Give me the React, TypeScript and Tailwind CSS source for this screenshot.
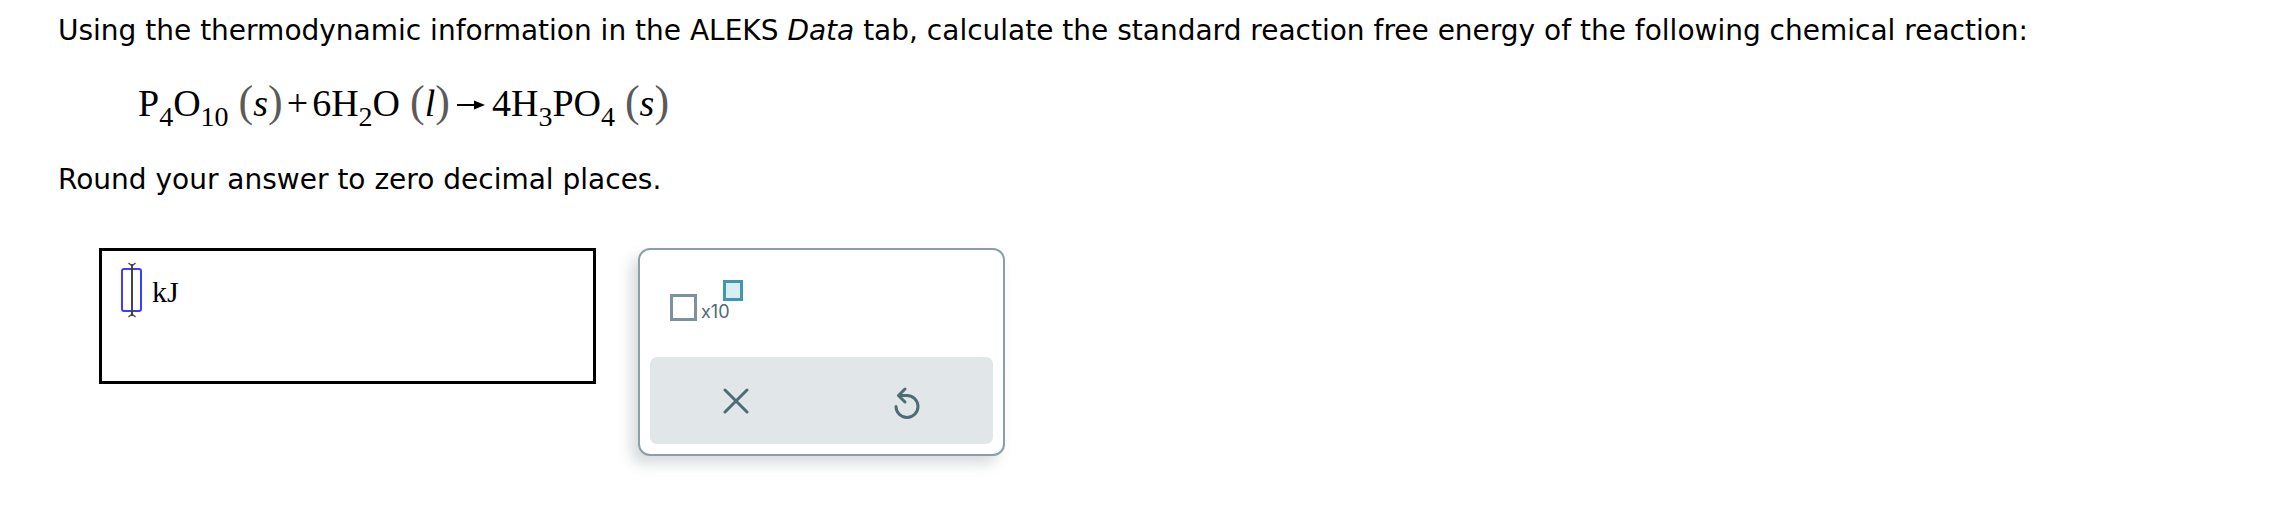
import React from 'react';

function Sub({ children }: { children: React.ReactNode }) {
  return <span className="relative top-[10px] text-[28px] leading-none">{children}</span>;
}

function Paren({ children }: { children: React.ReactNode }) {
  return <span className="text-[44px] text-[#5a5a5a]">{children}</span>;
}

function ReactionArrow() {
  return (
    <svg width="30" height="14" viewBox="0 0 30 14" className="inline-block align-middle mx-[6px] relative top-[-2px]">
      <line x1="1" y1="7" x2="20" y2="7" stroke="#000" strokeWidth="2" />
      <path d="M18 2.5 L29 7 L18 11.5 Z" fill="#000" />
    </svg>
  );
}

function CursorBox() {
  return (
    <div className="relative w-[21px] h-[44px] border-2 border-[#3d3dff] rounded-[3px]">
      <svg width="14" height="56" viewBox="0 0 14 56" className="absolute left-[1.5px] top-[-8px]">
        <line x1="7" y1="2" x2="7" y2="54" stroke="#444" strokeWidth="2" />
        <path d="M3.5 1 L7 4 L10.5 1" stroke="#444" strokeWidth="1.3" fill="none" />
        <path d="M3.5 55 L7 52 L10.5 55" stroke="#444" strokeWidth="1.3" fill="none" />
      </svg>
    </div>
  );
}

function ClearIcon() {
  return (
    <svg width="26" height="26" viewBox="0 0 26 26">
      <path d="M2 2 L24 24 M24 2 L2 24" stroke="#4e6b76" strokeWidth="3" strokeLinecap="round" />
    </svg>
  );
}

function UndoIcon() {
  return (
    <svg width="32" height="36" viewBox="0 0 32 36" fill="none">
      <path
        d="M8 12.5 H16 A11 11 0 1 1 5 23.5"
        stroke="#4e6b76"
        strokeWidth="3"
        strokeLinecap="round"
      />
      <path
        d="M14 6 L7.5 12.5 L14 19"
        stroke="#4e6b76"
        strokeWidth="3"
        strokeLinecap="round"
        strokeLinejoin="round"
      />
    </svg>
  );
}

export default function App() {
  return (
    <div className="w-[2274px] h-[518px] bg-white text-black font-['DejaVu_Sans',sans-serif] overflow-hidden">
      <div className="pl-[58px] pt-[15px]">
        <p className="text-[28px] leading-[32px] whitespace-nowrap">
          Using the thermodynamic information in the ALEKS <i>Data</i> tab, calculate the standard reaction
          free energy of the following chemical reaction:
        </p>

        <div className="mt-[31px] ml-[80px] font-['Liberation_Serif',serif] text-[38px] leading-[48px] whitespace-nowrap">
          P<Sub>4</Sub>O<Sub>10</Sub>
          <span className="ml-[10px]">
            <Paren>(</Paren><i>s</i><Paren>)</Paren>
          </span>
          <span className="mx-[4px]">+</span>6H<Sub>2</Sub>O
          <span className="ml-[10px]">
            <Paren>(</Paren><i>l</i><Paren>)</Paren>
          </span>
          <ReactionArrow />
          4H<Sub>3</Sub>PO<Sub>4</Sub>
          <span className="ml-[10px]">
            <Paren>(</Paren><i>s</i><Paren>)</Paren>
          </span>
        </div>

        <p className="mt-[37px] text-[28px] leading-[32px]">Round your answer to zero decimal places.</p>

        <div className="mt-[52px] ml-[41px] flex items-start gap-[42px]">
          {/* answer input */}
          <div className="w-[497px] h-[136px] border-[3px] border-black pl-[19px] pt-[17px]">
            <div className="flex items-start gap-[10px]">
              <CursorBox />
              <span className="font-['Liberation_Serif',serif] text-[30px] leading-none mt-[9px]">kJ</span>
            </div>
          </div>

          {/* keypad panel */}
          <div className="w-[367px] h-[208px] border-2 border-[#8a9fa7] rounded-[12px] bg-white shadow-[-7px_8px_14px_rgba(60,80,90,0.2)] flex flex-col px-[10px] pb-[10px]">
            <div className="h-[107px] pl-[20px] pt-[30px]">
              <div className="flex items-start">
                <div className="mt-[14px] w-[27px] h-[27px] border-[3px] border-[#7d939b]" />
                <span className="mt-[23px] ml-[4px] font-['Inter',sans-serif] text-[18px] leading-[18px] text-[#4f6a74]">
                  x10
                </span>
                <div className="ml-[-7px] w-[20px] h-[21px] border-[3px] border-[#3f98ae] bg-[#d6eef4]" />
              </div>
            </div>
            <div className="h-[87px] rounded-[7px] bg-[#e1e6e9] grid grid-cols-2">
              <div className="flex items-center justify-center">
                <ClearIcon />
              </div>
              <div className="flex items-center justify-center">
                <UndoIcon />
              </div>
            </div>
          </div>
        </div>
      </div>
    </div>
  );
}
